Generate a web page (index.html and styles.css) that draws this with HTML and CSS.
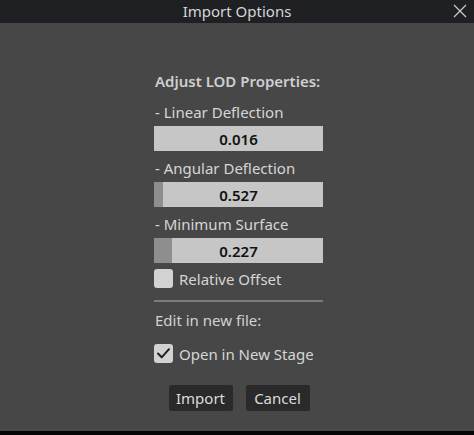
FILE: index.html
```html
<!DOCTYPE html>
<html>
<head>
<meta charset="utf-8">
<link rel="stylesheet" href="styles.css">
</head>
<body>
<div class="window">
  <div class="titlebar">
    <span class="title">Import Options</span>
    <svg class="close" width="14" height="14" viewBox="0 0 14 14"><path d="M1 1L13 13M13 1L1 13" stroke="#c8c8c8" stroke-width="1.3" fill="none"/></svg>
  </div>
  <div class="content">
    <div class="panel">
      <div class="heading">Adjust LOD Properties:</div>
      <div class="label">- Linear Deflection</div>
      <div class="slider"><div class="fill" style="width:0px"></div><span class="value">0.016</span></div>
      <div class="label">- Angular Deflection</div>
      <div class="slider"><div class="fill" style="width:9px"></div><span class="value">0.527</span></div>
      <div class="label">- Minimum Surface</div>
      <div class="slider"><div class="fill" style="width:18px"></div><span class="value">0.227</span></div>
      <div class="check-row first"><span class="box"></span><span class="check-text">Relative Offset</span></div>
      <div class="separator"></div>
      <div class="heading2">Edit in new file:</div>
      <div class="check-row"><span class="box"><svg width="19" height="19" viewBox="0 0 19 19"><path d="M4 9.5L7.7 13.3L15 5.2" stroke="#1e1e1e" stroke-width="2" fill="none" stroke-linecap="round" stroke-linejoin="round"/></svg></span><span class="check-text">Open in New Stage</span></div>
      <div class="buttons">
        <button class="btn">Import</button>
        <button class="btn">Cancel</button>
      </div>
    </div>
  </div>
  <div class="bottom"></div>
</div>
</body>
</html>
```
FILE: styles.css
```css
html, body {
  margin: 0;
  padding: 0;
  background: #474747;
}
body {
  font-family: "Noto Sans", "Open Sans", sans-serif;
  width: 474px;
  height: 435px;
  overflow: hidden;
}
.window {
  display: flex;
  flex-direction: column;
  height: 435px;
}
.titlebar {
  height: 23px;
  background: #1f2023;
  display: flex;
  align-items: center;
  justify-content: center;
  position: relative;
}
.title {
  color: #d6d6d6;
  font-size: 15px;
  line-height: 20px;
  margin-top: -2px;
}
.close {
  position: absolute;
  right: 7px;
  top: 4px;
}
.content {
  flex: 1;
  padding-left: 154px;
}
.panel {
  width: 169px;
  display: flex;
  flex-direction: column;
  padding-top: 48px;
}
.heading {
  color: #cfcfcf;
  font-size: 15px;
  font-weight: 600;
  line-height: 20px;
  white-space: nowrap;
  margin-bottom: 11px;
  margin-left: 1px;
}
.label {
  color: #d6d6d6;
  font-size: 15px;
  line-height: 20px;
  white-space: nowrap;
  margin-bottom: 4px;
  margin-left: 1px;
}
.slider {
  position: relative;
  height: 25px;
  background: #c6c6c6;
  display: flex;
  align-items: center;
  justify-content: center;
  margin-bottom: 7px;
}
.fill {
  position: absolute;
  left: 0;
  top: 0;
  bottom: 0;
  background: #8e8e8e;
}
.value {
  position: relative;
  color: #111;
  font-size: 15px;
  font-weight: 600;
}
.check-row {
  display: flex;
  align-items: center;
  gap: 6px;
  height: 19px;
}
.check-row.first {
  margin-top: -1px;
}
.box {
  width: 19px;
  height: 19px;
  border-radius: 3px;
  background: #d2d2d2;
  display: block;
}
.box svg { display: block; }
.check-text {
  color: #d6d6d6;
  font-size: 15px;
  line-height: 20px;
  white-space: nowrap;
}
.separator {
  height: 2px;
  background: #7c7c7c;
  margin-top: 12px;
  margin-bottom: 8px;
}
.heading2 {
  color: #d2d2d2;
  font-size: 15px;
  line-height: 20px;
  margin-bottom: 14px;
  margin-left: 1px;
}
.buttons {
  display: flex;
  justify-content: center;
  gap: 13px;
  margin-top: 22px;
  padding-left: 1px;
}
.btn {
  width: 64px;
  height: 26px;
  background: #2a2a2a;
  border: none;
  border-radius: 2px;
  color: #dcdcdc;
  font-family: "Noto Sans", "Open Sans", sans-serif;
  font-size: 15px;
  padding: 0;
}
.bottom {
  height: 4px;
  background: #050505;
}
```
